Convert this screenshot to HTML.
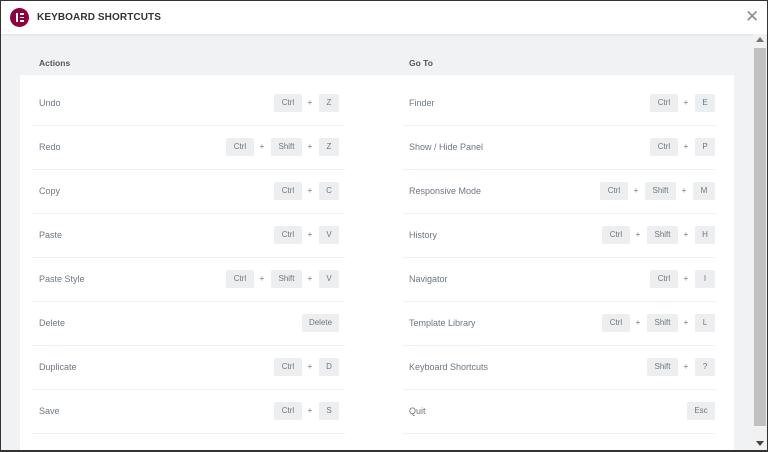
<!DOCTYPE html>
<html><head><style>
*{margin:0;padding:0;box-sizing:border-box}
body{width:768px;height:452px;overflow:hidden;background:#333;font-family:"Liberation Sans",sans-serif;position:relative}
#win{position:absolute;left:1px;top:1px;width:766px;height:449px;background:#f1f2f3;overflow:hidden}
#hdr{position:absolute;left:0;top:0;width:766px;height:33px;background:#fff;box-shadow:0 1px 3px rgba(0,0,0,.08)}
#logo{position:absolute;left:9px;top:7px;width:19px;height:19px;border-radius:50%;background:#92003b}
#logo i{position:absolute;background:#fff}
#title{position:absolute;left:36px;top:11px;font-size:10px;font-weight:bold;color:#333;letter-spacing:.1px}
#x{position:absolute;left:744px;top:6px;font-size:17px;color:#8a8d91}
.head{position:absolute;top:57px;font-size:8.5px;font-weight:bold;color:#555}
#panel{position:absolute;left:19px;top:74px;width:714px;height:380px;background:#fff}
.r{position:absolute;height:18px;font-size:9px;color:#6d7882;line-height:18px}
.sep{position:absolute;height:1px;background:#eef0f2}
.k{position:absolute;top:0;height:18px;background:#eceeef;border-radius:2px;font-size:8px;color:#6d7882;text-align:center;line-height:18px}
.p{position:absolute;top:0;font-size:8px;color:#6d7882;width:8px;text-align:center}
#sb{position:absolute;left:752px;top:33px;width:14px;height:416px;background:#f1f1f1}
#th{position:absolute;left:753px;top:47px;width:12px;height:378px;background:#c1c1c1}
</style></head><body>
<div id="win">
<div id="hdr">
<div id="logo"><i style="left:6px;top:5px;width:2px;height:9px"></i><i style="left:9.5px;top:5px;width:4px;height:1.8px"></i><i style="left:9.5px;top:8.6px;width:4px;height:1.8px"></i><i style="left:9.5px;top:12.2px;width:4px;height:1.8px"></i></div>
<div id="title">KEYBOARD SHORTCUTS</div>
<div id="x">✕</div>
</div>
<div class="head" style="left:38px">Actions</div>
<div class="head" style="left:408px">Go To</div>
<div id="panel"></div>
<div id="rows"></div>
<div id="sb"></div><div id="th"></div>
<div style="position:absolute;left:755px;top:36px;width:0;height:0;border-left:4px solid transparent;border-right:4px solid transparent;border-bottom:5px solid #777"></div>
<div style="position:absolute;left:755px;top:440px;width:0;height:0;border-left:4px solid transparent;border-right:4px solid transparent;border-top:5px solid #444"></div>
</div>
<script>
var L=[["Undo",["Ctrl","Z"]],["Redo",["Ctrl","Shift","Z"]],["Copy",["Ctrl","C"]],["Paste",["Ctrl","V"]],["Paste Style",["Ctrl","Shift","V"]],["Delete",["Delete"]],["Duplicate",["Ctrl","D"]],["Save",["Ctrl","S"]]];
var R=[["Finder",["Ctrl","E"]],["Show / Hide Panel",["Ctrl","P"]],["Responsive Mode",["Ctrl","Shift","M"]],["History",["Ctrl","Shift","H"]],["Navigator",["Ctrl","I"]],["Template Library",["Ctrl","Shift","L"]],["Keyboard Shortcuts",["Shift","?"]],["Quit",["Esc"]]];
var W={Ctrl:28,Shift:31,Delete:37,Esc:28,M:22};
var h="";
function col(a,tx,kr,sx,sw){a.forEach(function(r,i){var y=94+44*i-1;
h+='<div class="r" style="left:'+(tx-1)+'px;top:'+y+'px">'+r[0]+'</div>';
var x=kr-1,ks=r[1];
for(var j=ks.length-1;j>=0;j--){var w=W[ks[j]]||20;x-=w;h+='<div class="r" style="left:'+x+'px;top:'+y+'px;width:'+w+'px"><div class="k" style="left:0;width:'+w+'px">'+ks[j]+'</div></div>';
if(j>0){x-=17;h+='<div class="r" style="left:'+(x+4)+'px;top:'+y+'px"><div class="p">+</div></div>';}}
h+='<div class="sep" style="left:'+(sx-1)+'px;top:'+(124+44*i)+'px;width:'+sw+'px"></div>';});}
col(L,39,339,32,313);col(R,409,715,403,312);
document.getElementById("rows").innerHTML=h;
</script>
</body></html>
